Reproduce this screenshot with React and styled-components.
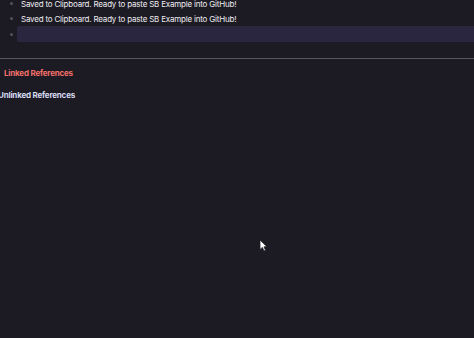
import React from "react";
import styled, { createGlobalStyle } from "styled-components";

const Global = createGlobalStyle`
  html, body {
    margin: 0;
    padding: 0;
    background: #1c1a23;
    overflow: hidden;
  }
`

const Page = styled.div`
  position: relative;
  width: 474px;
  height: 338px;
  background: #1c1a23;
  font-family: Inter, "Noto Sans", sans-serif;
  overflow: hidden;
`

const Blocks = styled.div`
  display: flex;
  flex-direction: column;
  margin-top: -4px;
  padding-bottom: 16px;
`

const Block = styled.div`
  display: flex;
  align-items: center;
  height: ${p => p.$tall ? "16px" : "15px"};
`

const Bullet = styled.span`
  width: 17px;
  flex: none;
  display: flex;
  justify-content: center;
  padding-left: 6px;
  box-sizing: border-box;
  &::before {
    content: "";
    width: 3px;
    height: 3px;
    border-radius: 50%;
    background: #55535f;
  }
`

const Content = styled.div`
  flex: 1;
  height: 100%;
  display: flex;
  align-items: center;
  padding-left: 4px;
  font-size: 8px;
  letter-spacing: -0.2px;
  color: #eeedf2;
  background: ${p => p.$editing ? "#2a2640" : "transparent"};
  border-radius: 2px 0 0 2px;
`

const Divider = styled.div`
  height: 1px;
  background: #57555e;
`

const Refs = styled.div`
  display: flex;
  flex-direction: column;
  gap: 14px;
  padding-top: 10px;
`

const RefTitle = styled.div`
  font-size: 8px;
  font-weight: 700;
  letter-spacing: -0.2px;
  color: ${p => p.$color};
  margin-left: ${p => p.$indent}px;
  line-height: 8px;
`

const Cursor = styled.svg`
  position: absolute;
  left: 259px;
  top: 239px;
`

const lines = [
  "Saved to Clipboard. Ready to paste SB Example into GitHub!",
  "Saved to Clipboard. Ready to paste SB Example into GitHub!",
];

export default function App() {
  return (
    <Page>
      <Global />
      <Blocks>
        {lines.map((t, i) => (
          <Block key={i}>
            <Bullet />
            <Content>{t}</Content>
          </Block>
        ))}
        <Block $tall>
          <Bullet />
          <Content $editing />
        </Block>
      </Blocks>
      <Divider />
      <Refs>
        <RefTitle $color="#f2706a" $indent={4}>Linked References</RefTitle>
        <RefTitle $color="#d6dcf2" $indent={-2}>Unlinked References</RefTitle>
      </Refs>
      <Cursor width="9" height="13" viewBox="0 0 9 13">
        <path d="M1 1 L1 10.5 L3.4 8.4 L5 12 L6.5 11.3 L5 7.8 L8 7.8 Z" fill="#fff" stroke="#222" strokeWidth="0.8" />
      </Cursor>
    </Page>
  );
}
